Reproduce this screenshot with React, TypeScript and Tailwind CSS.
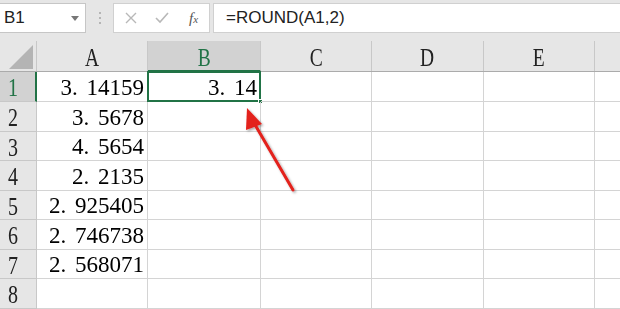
import React from "react";

const cols = ["A", "B", "C", "D", "E", ""];
const colW = [111, 113, 111, 112, 111, 40];
const rowH = [30, 30, 29, 30, 29, 30, 29, 30];
const aVals: [string, string][] = [
  ["3", "14159"],
  ["3", "5678"],
  ["4", "5654"],
  ["2", "2135"],
  ["2", "925405"],
  ["2", "746738"],
  ["2", "568071"],
];

const serif = { fontFamily: '"Liberation Serif", "Times New Roman", serif' };
const sans = { fontFamily: '"Liberation Sans", Arial, sans-serif' };

function Num({ v }: { v: [string, string] }) {
  return (
    <span className="inline-block scale-x-[0.96] origin-right">
      {v[0]}
      <span className="mr-[9px]">.</span>
      {v[1]}
    </span>
  );
}

export default function App() {
  return (
    <div className="w-[620px] h-[309px] overflow-hidden bg-[#e6e6e6] relative">
      {/* formula bar */}
      <div className="flex items-center h-[41px] pt-[3px] pb-[8px]" style={sans}>
        <div className="w-[86px] h-[30px] bg-white border border-[#c6c6c6] border-l-0 flex items-center justify-between pl-[4px] pr-[6px] text-[17px] text-[#222]">
          <span>B1</span>
          <svg width="8" height="5" viewBox="0 0 8 5">
            <path d="M0 0 L8 0 L4 5 Z" fill="#777" />
          </svg>
        </div>
        <div className="w-[27px] flex flex-col items-center gap-[3px]">
          <span className="w-[2px] h-[2px] bg-[#b5b5b5]" />
          <span className="w-[2px] h-[2px] bg-[#b5b5b5]" />
          <span className="w-[2px] h-[2px] bg-[#b5b5b5]" />
        </div>
        <div className="w-[97px] h-[30px] bg-white border border-[#d0d0d0] flex items-center pl-[11px] gap-[18px]">
          <svg width="12" height="12" viewBox="0 0 12 12">
            <path d="M1 1 L11 11 M11 1 L1 11" stroke="#b8b8b8" strokeWidth="1.4" />
          </svg>
          <svg width="14" height="12" viewBox="0 0 14 12">
            <path d="M1 6 L5 10 L13 1" stroke="#b8b8b8" strokeWidth="1.6" fill="none" />
          </svg>
          <span className="italic text-[15px] text-[#555] ml-[2px]" style={serif}>
            f<span className="text-[11px]">x</span>
          </span>
        </div>
        <div className="flex-1 ml-[3px] h-[30px] bg-white border border-[#d0d0d0] border-r-0 flex items-center pl-[12px] text-[17px] text-[#222]">
          =ROUND(A1,2)
        </div>
      </div>

      {/* grid */}
      <div className="flex flex-col bg-white" style={serif}>
        {/* header row */}
        <div className="flex h-[31px] bg-[#e6e6e6] border-b border-[#ababab]">
          <div className="w-[37px] shrink-0 border-r border-[#c8c8c8] relative">
            <svg className="absolute right-[3px] bottom-[2px]" width="24" height="24" viewBox="0 0 24 24">
              <path d="M24 0 L24 24 L0 24 Z" fill="#b4b4b4" />
            </svg>
          </div>
          {cols.map((c, i) => (
            <div
              key={i}
              className={
                "shrink-0 flex items-center justify-center pt-[3px] text-[25px] border-r border-[#c8c8c8] " +
                (c === "B" ? "bg-[#d2d2d2] text-[#217346] border-b-2 border-b-[#217346] -mb-[1px]" : "text-[#222]")
              }
              style={{ width: colW[i] }}
            >
              <span className="inline-block scale-x-[0.78] leading-none">{c}</span>
            </div>
          ))}
        </div>
        {rowH.map((h, r) => (
          <div key={r} className="flex" style={{ height: h }}>
            <div
              className={
                "w-[37px] shrink-0 border-b flex items-center pl-[8px] pt-[2px] text-[25px] " +
                (r === 0
                  ? "bg-[#d2d2d2] text-[#217346] border-r-2 border-r-[#217346] border-b-[#c8c8c8]"
                  : "bg-[#e6e6e6] text-[#222] border-r border-[#c8c8c8]")
              }
            >
              <span className="inline-block scale-x-[0.8] origin-left leading-none">{r + 1}</span>
            </div>
            {colW.map((w, c) => (
              <div
                key={c}
                className="shrink-0 border-r border-b border-[#d4d4d4] flex items-center justify-end pr-[3px] text-[24px] text-black relative"
                style={{ width: w }}
              >
                {c === 0 && aVals[r] ? <Num v={aVals[r]} /> : null}
                {c === 1 && r === 0 ? (
                  <>
                    <Num v={["3", "14"]} />
                    <div className="absolute -left-[1px] -top-[1px] -right-[1px] -bottom-[1px] border-2 border-[#217346]" />
                    <div className="absolute -right-[3px] -bottom-[3px] w-[5px] h-[5px] bg-[#217346] border border-white" />
                  </>
                ) : null}
              </div>
            ))}
          </div>
        ))}
      </div>

      {/* arrow */}
      <svg className="absolute left-0 top-0" width="620" height="309" viewBox="0 0 620 309">
        <defs>
          <filter id="sh" x="-20%" y="-20%" width="140%" height="140%">
            <feDropShadow dx="1.5" dy="1.5" stdDeviation="1" floodColor="#000" floodOpacity="0.35" />
          </filter>
        </defs>
        <g filter="url(#sh)">
          <line x1="293" y1="190" x2="254" y2="123" stroke="#e3201b" strokeWidth="3" strokeLinecap="round" />
          <path d="M247 108 L262 124 L246 130 Z" fill="#e3201b" />
        </g>
      </svg>
    </div>
  );
}
